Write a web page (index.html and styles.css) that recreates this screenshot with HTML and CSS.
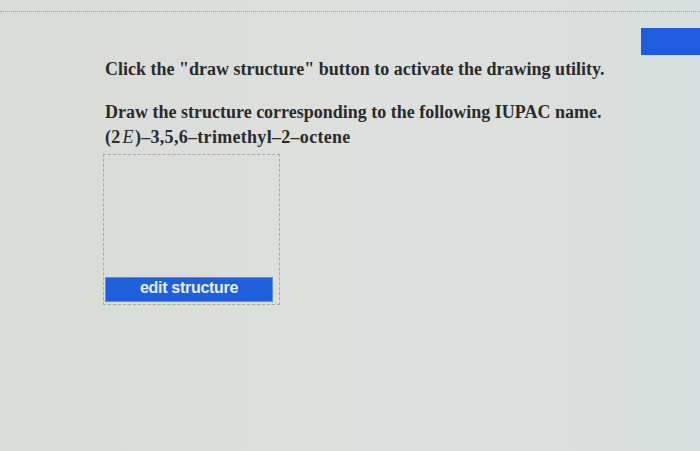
FILE: index.html
```html
<!DOCTYPE html>
<html>
<head>
<meta charset="utf-8">
<link rel="stylesheet" href="styles.css">
</head>
<body>
<div class="topline"></div>
<div class="bar"><div class="bar-block"></div></div>
<main class="content">
  <p class="instr">Click the "draw structure" button to activate the drawing utility.</p>
  <p class="question">Draw the structure corresponding to the following IUPAC name.</p>
  <p class="name">(2<i>E</i>)–3,5,6–trimethyl–2–octene</p>
  <div class="drawbox">
    <button class="edit">edit structure</button>
  </div>
</main>
</body>
</html>
```
FILE: styles.css
```css
html, body {
  margin: 0;
  padding: 0;
}
body {
  width: 700px;
  height: 451px;
  overflow: hidden;
  background: linear-gradient(90deg, #d9dbd7 0%, #dde0dd 50%, #d9dfde 100%);
  font-family: "Liberation Serif", "Times New Roman", serif;
  color: #2b2b2b;
}
.topline {
  margin-top: 11px;
  border-top: 1px dotted #a4a49c;
}
.bar {
  display: flex;
  justify-content: flex-end;
  margin-top: 16px;
}
.bar-block {
  width: 59px;
  height: 27px;
  background: #1e5de0;
}
.content {
  padding-left: 105px;
  padding-top: 3px;
}
.content p {
  margin: 0;
  font-size: 18px;
  line-height: 23px;
  font-weight: bold;
}
.content .instr {
  margin-bottom: 20px;
}
.content .name {
  margin-top: 2px;
  letter-spacing: 0.3px;
}
.name i {
  font-weight: normal;
  padding-left: 2px;
  padding-right: 1px;
}
.drawbox {
  margin-top: 5px;
  margin-left: -2px;
  width: 168px;
  height: 147px;
  border: 1px dashed #a9aaa6;
  display: flex;
  flex-direction: column;
  justify-content: flex-end;
  padding: 0 6px 2px 1px;
  box-sizing: content-box;
}
.edit {
  width: 168px;
  height: 25px;
  margin: 0;
  padding: 0 0 3px 0;
  border: 1px solid #5b8fe6;
  background: #1f5fdc;
  color: #e8eef8;
  font-family: "Liberation Sans", Arial, sans-serif;
  font-weight: bold;
  font-size: 16px;
  letter-spacing: -0.3px;
}
```
